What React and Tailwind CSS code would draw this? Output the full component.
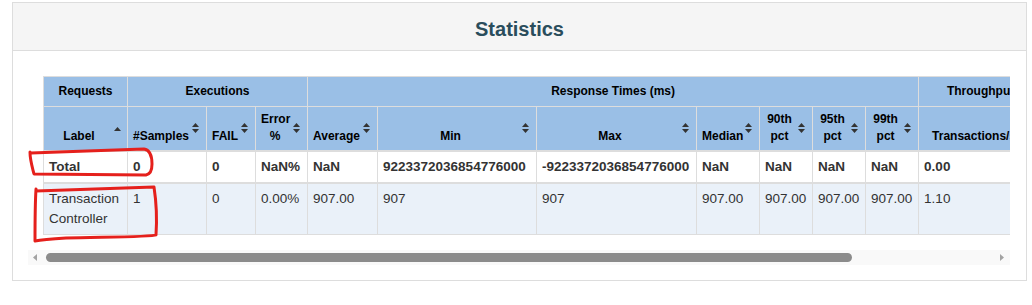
import React from "react";

const columns = [
  { label: ["Label"], w: 84, sort: "asc" },
  { label: ["#Samples"], w: 79 },
  { label: ["FAIL"], w: 49 },
  { label: ["Error", "%"], w: 52 },
  { label: ["Average"], w: 70 },
  { label: ["Min"], w: 159 },
  { label: ["Max"], w: 160 },
  { label: ["Median"], w: 63 },
  { label: ["90th", "pct"], w: 53 },
  { label: ["95th", "pct"], w: 53 },
  { label: ["99th", "pct"], w: 53 },
  { label: ["Transactions/s"], w: 124 },
  { label: ["Received"], w: 96 },
  { label: ["Sent"], w: 96 },
];

const groups = [
  { label: "Requests", span: 1 },
  { label: "Executions", span: 3 },
  { label: "Response Times (ms)", span: 7 },
  { label: "Throughput", span: 1 },
  { label: "Network (KB/sec)", span: 2 },
];

const totalRow = [
  "Total", "0", "0", "NaN%", "NaN", "9223372036854776000", "-9223372036854776000",
  "NaN", "NaN", "NaN", "NaN", "0.00", "0.00", "0.00",
];

const rows = [
  [
    "Transaction Controller", "1", "0", "0.00%", "907.00", "907", "907",
    "907.00", "907.00", "907.00", "907.00", "1.10", "0.00", "0.00",
  ],
];

function SortIcon({ dir }) {
  if (dir === "asc") {
    return (
      <svg width="7" height="4" viewBox="0 0 7 4" className="absolute right-[6px] top-[20px]">
        <path d="M0 4 L3.5 0 L7 4 Z" fill="#333" />
      </svg>
    );
  }
  return (
    <svg width="7" height="10" viewBox="0 0 7 10" className="absolute right-[7px] top-[16px]">
      <path d="M0 4 L3.5 0 L7 4 Z" fill="#333" />
      <path d="M0 6 L3.5 10 L7 6 Z" fill="#333" />
    </svg>
  );
}

function FakeScrollbar() {
  return (
    <div className="flex items-center h-[15px] bg-[#f9f9f9] mt-[15px]">
      <svg width="4" height="7" viewBox="0 0 4 7" className="ml-[5px]">
        <path d="M4 0 L0 3.5 L4 7 Z" fill="#a3a3a3" />
      </svg>
      <div className="ml-[9px] w-[806px] h-[9px] rounded-full bg-[#8b8b8b]" />
      <div className="flex-1" />
      <svg width="4" height="7" viewBox="0 0 4 7" className="mr-[6px]">
        <path d="M0 0 L4 3.5 L0 7 Z" fill="#a3a3a3" />
      </svg>
    </div>
  );
}

export default function App() {
  const tableWidth = columns.reduce((s, c) => s + c.w, 0);

  return (
    <div className="relative w-[1032px] h-[305px] bg-white font-['Liberation_Sans',Arial,sans-serif] overflow-hidden">
      <div className="ml-[12px] mt-[2px] w-[1015px] border border-[#dddddd]">
        {/* Panel heading */}
        <div className="bg-[#f5f5f5] border-b border-[#dddddd] h-[48px] pt-[15px]">
          <h3 className="text-center text-[20px] leading-[22px] font-bold text-[#2a4d5c]">
            Statistics
          </h3>
        </div>

        {/* Panel body */}
        <div className="pt-[25px] pb-[15px] pl-[15px] pr-[16px]">
          <div className="overflow-hidden pl-[15px]">
            <table
              className="table-fixed border-collapse text-[13.5px] leading-[20px] text-[#333]"
              style={{ width: tableWidth }}
            >
              <colgroup>
                {columns.map((c, i) => (
                  <col key={i} style={{ width: c.w }} />
                ))}
              </colgroup>
              <thead>
                <tr className="bg-[#9abfe6]">
                  {groups.map((g) => (
                    <th
                      key={g.label}
                      colSpan={g.span}
                      className="border border-[#dddddd] py-[6px] px-[5px] text-[12px] leading-[17px] font-bold text-black text-center whitespace-nowrap overflow-hidden"
                    >
                      {g.label}
                    </th>
                  ))}
                </tr>
                <tr className="bg-[#9abfe6]">
                  {columns.map((c, i) => (
                    <th
                      key={i}
                      className="relative border border-b-2 border-[#dddddd] pt-[4px] pb-[5px] pl-[5px] pr-[18px] text-[12px] leading-[17px] font-bold text-black text-center align-bottom whitespace-nowrap overflow-hidden"
                    >
                      {c.label.map((l, j) => (
                        <div key={j}>{l}</div>
                      ))}
                      <SortIcon dir={c.sort} />
                    </th>
                  ))}
                </tr>
              </thead>
              <tbody>
                <tr className="bg-white font-bold">
                  {totalRow.map((v, i) => (
                    <td
                      key={i}
                      className="border border-b-2 border-[#dddddd] px-[5px] py-[5px] align-top whitespace-nowrap overflow-hidden"
                    >
                      {v}
                    </td>
                  ))}
                </tr>
                {rows.map((r, ri) => (
                  <tr key={ri} className="bg-[#eaf1f9]">
                    {r.map((v, i) => (
                      <td
                        key={i}
                        className={`border border-[#dddddd] px-[5px] py-[5px] align-top overflow-hidden ${
                          i === 0 ? "" : "whitespace-nowrap"
                        }`}
                      >
                        {v}
                      </td>
                    ))}
                  </tr>
                ))}
              </tbody>
            </table>
          </div>
          <FakeScrollbar />
        </div>
      </div>

      {/* Red hand-drawn highlights */}
      <svg
        className="absolute inset-0 pointer-events-none"
        width="1032"
        height="305"
        viewBox="0 0 1032 305"
      >
        <path
          d="M31 153 C 60 152, 110 150, 144 149 C 150 150, 152 156, 152 164 C 152 170, 151 174, 146 175 C 110 175, 70 174, 34 174 C 32 166, 30 160, 30 152"
          fill="none"
          stroke="#e5201c"
          strokeWidth="3"
          strokeLinecap="round"
          strokeLinejoin="round"
        />
        <path
          d="M36 191 C 70 190, 120 188, 154 187 C 156 200, 157 220, 156 235 C 152 237, 100 237, 66 238 C 50 239, 40 240, 35 241 C 35 225, 35 205, 36 189"
          fill="none"
          stroke="#e5201c"
          strokeWidth="3"
          strokeLinecap="round"
          strokeLinejoin="round"
        />
      </svg>
    </div>
  );
}
